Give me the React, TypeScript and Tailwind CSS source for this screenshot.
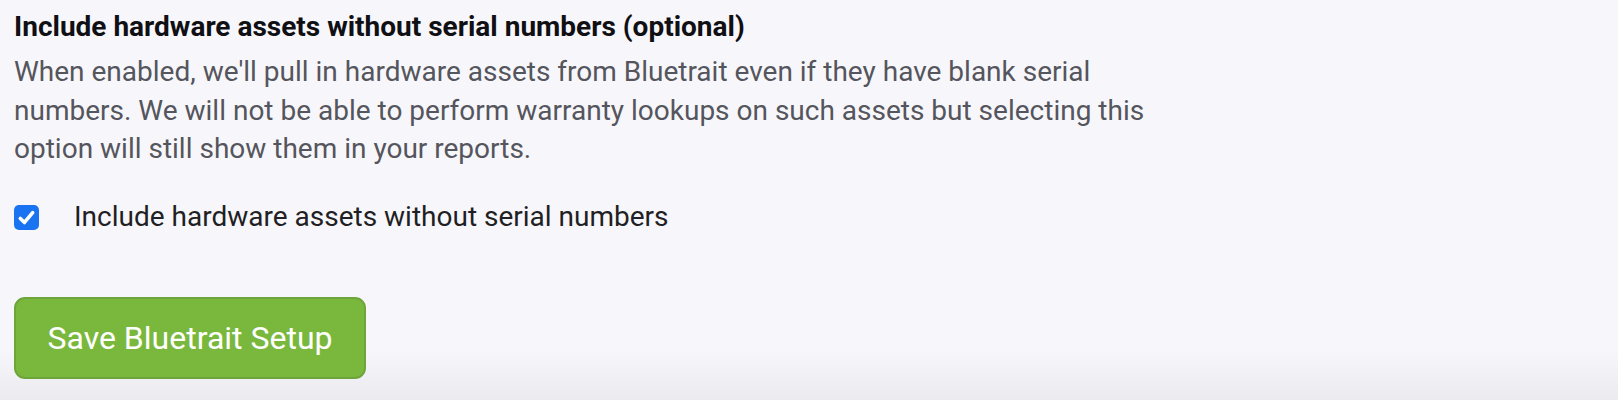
import React from "react";

function CheckIcon() {
  return (
    <svg viewBox="0 0 16 16" className="h-[19px] w-[19px]" fill="none">
      <path
        d="M2.8 8.8 L6.3 12.2 L13.2 3.8"
        stroke="white"
        strokeWidth="3"
        strokeLinecap="round"
        strokeLinejoin="round"
      />
    </svg>
  );
}

export default function App() {
  return (
    <div
      className="min-h-[400px] w-full bg-[linear-gradient(to_bottom,#f7f7fb_0px,#f7f7fb_350px,#ebebef_400px)] pl-[14px] pt-[9px]"
      style={{ fontFamily: "Roboto, 'Liberation Sans', sans-serif" }}
    >
      <h3 className="text-[28px] font-bold leading-[36px] text-[#101014]">
        Include hardware assets without serial numbers (optional)
      </h3>
      <p className="mt-[8px] max-w-[1160px] text-[28px] leading-[38.7px] text-[#55555d]">
        When enabled, we'll pull in hardware assets from Bluetrait even if they have blank serial numbers. We will not
        be able to perform warranty lookups on such assets but selecting this option will still show them in your
        reports.
      </p>
      <label className="mt-[33px] flex items-center gap-[35px]">
        <span className="flex h-[25px] w-[25px] items-center justify-center rounded-[5px] bg-[#1a73f0]">
          <CheckIcon />
        </span>
        <span className="text-[28px] leading-[30px] text-[#1f1f24]">
          Include hardware assets without serial numbers
        </span>
      </label>
      <button
        type="button"
        className="mt-[65px] flex h-[82px] w-[352px] items-center justify-center rounded-[11px] border-2 border-[#6ea53a] bg-[#7ab83d] text-[32px] text-white"
      >
        Save Bluetrait Setup
      </button>
    </div>
  );
}
